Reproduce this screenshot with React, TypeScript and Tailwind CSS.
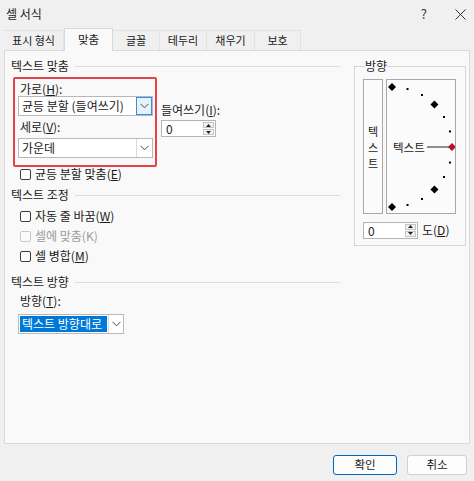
import React from "react";

const FONT = "font-['Noto_Sans_CJK_KR','Noto_Sans',sans-serif]";

function Chevron() {
  return (
    <svg width="9" height="6" viewBox="0 0 9 6" fill="none">
      <polyline points="0.5,0.8 4.5,4.8 8.5,0.8" stroke="#4a4a4a" strokeWidth="1" />
    </svg>
  );
}

function Box({ disabled }: { disabled?: boolean }) {
  return (
    <span
      className={
        disabled
          ? "inline-block w-[11px] h-[11px] rounded-[2px] border border-[#c8c8c8] bg-[#fbfbfb]"
          : "inline-block w-[11px] h-[11px] rounded-[2px] border border-[#3c3c3c] bg-white"
      }
    />
  );
}

function Check({ label, mn, disabled }: { label: string; mn: string; disabled?: boolean }) {
  return (
    <div className={disabled ? "h-[20px] flex items-center gap-[4px] text-[#9c9c9c]" : "h-[20px] flex items-center gap-[4px]"}>
      <Box disabled={disabled} />
      <span>
        {label}(<span className={disabled ? "" : "underline underline-offset-1"}>{mn}</span>)
      </span>
    </div>
  );
}

function Header({ text }: { text: string }) {
  return (
    <div className="h-[16px] flex items-center gap-[6px]">
      <span>{text}</span>
      <span className="flex-1 h-px bg-[#dddddd]" />
    </div>
  );
}

function Spinner({ w }: { w: string }) {
  return (
    <div className={`${w} h-[17px] flex bg-white border border-[#b4b4b4]`}>
      <span className="flex-1 pl-[4px] leading-[15px]">0</span>
      <div className="w-[13px] flex flex-col gap-px p-px">
        <span className="flex-1 flex items-center justify-center bg-[#f2f2f2] border border-[#c4c4c4]">
          <svg width="5" height="3" viewBox="0 0 5 3"><polygon points="2.5,0 5,3 0,3" fill="#222" /></svg>
        </span>
        <span className="flex-1 flex items-center justify-center bg-[#f2f2f2] border border-[#c4c4c4]">
          <svg width="5" height="3" viewBox="0 0 5 3"><polygon points="0,0 5,0 2.5,3" fill="#222" /></svg>
        </span>
      </div>
    </div>
  );
}

function Dial() {
  const cx = 5;
  const cy = 67;
  const r = 60;
  const pts = [] as { x: number; y: number; a: number }[];
  for (let a = -90; a <= 90; a += 15) {
    const rad = (a * Math.PI) / 180;
    pts.push({ x: cx + r * Math.cos(rad), y: cy - r * Math.sin(rad), a });
  }
  return (
    <div className="relative w-[70px] h-[135px] border border-[#a8a8a8] bg-[#fbfbfb]">
      <svg className="absolute inset-0" width="68" height="133" viewBox="0 0 68 133">
        <line x1="40" y1={cy} x2={cx + r - 2} y2={cy} stroke="#222" strokeWidth="1" />
        {pts.map((p) =>
          p.a % 45 === 0 ? (
            <polygon
              key={p.a}
              points={`${p.x},${p.y - 4} ${p.x + 4},${p.y} ${p.x},${p.y + 4} ${p.x - 4},${p.y}`}
              fill={p.a === 0 ? "#b3122a" : "#000"}
            />
          ) : (
            <rect key={p.a} x={p.x - 1} y={p.y - 1} width="2" height="2" fill="#000" />
          )
        )}
      </svg>
      <span className="absolute left-[6px] top-[59px] text-[11.5px] leading-[16px]">텍스트</span>
    </div>
  );
}

const tabs = ["표시 형식", "맞춤", "글꼴", "테두리", "채우기", "보호"];
const tabW = ["w-[60px]", "w-[49px]", "w-[47px]", "w-[47px]", "w-[48px]", "w-[46px]"];

export default function App() {
  return (
    <div className={`${FONT} w-[474px] h-[481px] bg-[#f0f0f0] text-[#1a1a1a] text-[12px] flex flex-col`}>
      {/* title bar */}
      <div className="h-[28px] flex items-center justify-between pl-[6px] pr-[8px]">
        <span className="text-[12px] text-[#222]">셀 서식</span>
        <div className="flex items-center gap-[28px]">
          <span className="text-[13px] text-[#333]">?</span>
          <svg width="11" height="11" viewBox="0 0 11 11">
            <path d="M0.5 0.5 L10.5 10.5 M10.5 0.5 L0.5 10.5" stroke="#333" strokeWidth="1" />
          </svg>
        </div>
      </div>

      {/* tabs */}
      <div className="h-[22px] flex items-end pl-[4px]">
        {tabs.map((t, i) =>
          i === 1 ? (
            <div
              key={t}
              className={`${tabW[i]} h-[23px] -mb-px relative z-10 flex items-center justify-center bg-[#f9f9f9] border border-b-0 border-[#d9d9d9] text-[11.5px]`}
            >
              {t}
            </div>
          ) : (
            <div
              key={t}
              className={`${tabW[i]} h-[20px] flex items-center justify-center bg-[#f0f0f0] border-t border-r border-[#e2e2e2] text-[11px]`}
            >
              {t}
            </div>
          )
        )}
      </div>

      {/* panel */}
      <div className="flex-1 mx-[4px] bg-[#f9f9f9] border border-[#d9d9d9] flex">
        <div className="w-[335px] pl-[6px] pt-[7px] flex flex-col">
          <Header text="텍스트 맞춤" />
          <div className="flex items-start mt-[3px] ml-[2px]">
            <div className="w-[144px] h-[90px] border-2 border-[#e3434b] rounded-[2px] pl-[3px] pt-[2px]">
              <div className="h-[15px] ml-[2px] leading-[15px]">
                가로(<span className="underline underline-offset-1">H</span>):
              </div>
              <div className="w-[135px] h-[20px] flex bg-white border border-[#b8b8b8]">
                <span className="flex-1 pl-[3px] leading-[18px] whitespace-nowrap">균등 분할 (들여쓰기)</span>
                <span className="w-[16px] flex items-center justify-center bg-[#e5f1fb] border border-[#3a8fdc]">
                  <Chevron />
                </span>
              </div>
              <div className="h-[15px] ml-[2px] mt-[3px] leading-[15px]">
                세로(<span className="underline underline-offset-1">V</span>):
              </div>
              <div className="w-[135px] h-[20px] mt-[4px] flex bg-white border border-[#b8b8b8]">
                <span className="flex-1 pl-[3px] leading-[18px]">가운데</span>
                <span className="w-[16px] flex items-center justify-center border-l border-[#dadada]">
                  <Chevron />
                </span>
              </div>
            </div>
            <div className="ml-[4px] mt-[25px] flex flex-col gap-[2px]">
              <div className="h-[16px] leading-[16px] whitespace-nowrap">
                들여쓰기(<span className="underline underline-offset-1">I</span>):
              </div>
              <Spinner w="w-[55px]" />
            </div>
          </div>
          <div className="ml-[9px] -mt-[3px]">
            <Check label="균등 분할 맞춤" mn="E" />
          </div>
          <div className="mt-[3px]">
            <Header text="텍스트 조정" />
          </div>
          <div className="ml-[9px] mt-[3px] flex flex-col">
            <Check label="자동 줄 바꿈" mn="W" />
            <Check label="셀에 맞춤" mn="K" disabled />
            <Check label="셀 병합" mn="M" />
          </div>
          <div className="mt-[8px]">
            <Header text="텍스트 방향" />
          </div>
          <div className="ml-[9px] mt-[3px] h-[16px] leading-[16px]">
            방향(<span className="underline underline-offset-1">T</span>):
          </div>
          <div className="ml-[7px] mt-[5px] w-[106px] h-[20px] flex bg-white border border-[#b8b8b8]">
            <span className="flex-1 m-px bg-[#0078d7] text-white pl-[2px] leading-[16px] whitespace-nowrap">텍스트 방향대로</span>
            <span className="w-[15px] flex items-center justify-center border-l border-[#dadada]">
              <Chevron />
            </span>
          </div>
        </div>

        {/* orientation */}
        <fieldset className="ml-[14px] mt-[7px] w-[112px] h-[188px] border border-[#d6d6d6] pl-[8px] pt-[5px]">
          <legend className="ml-[2px] px-0 leading-[16px]">방향</legend>
          <div className="flex gap-[3px]">
            <div className="w-[20px] h-[135px] border border-[#a8a8a8] bg-[#fbfbfb] flex flex-col items-center justify-center text-[11px]">
              <span className="h-[16px] leading-[16px]">텍</span>
              <span className="h-[16px] leading-[16px]">스</span>
              <span className="h-[16px] leading-[16px]">트</span>
            </div>
            <Dial />
          </div>
          <div className="flex items-center gap-[4px] mt-[7px]">
            <Spinner w="w-[55px]" />
            <span>
              도(<span className="underline underline-offset-1">D</span>)
            </span>
          </div>
        </fieldset>
      </div>

      {/* buttons */}
      <div className="h-[37px] flex items-start justify-end gap-[10px] pt-[11px] pr-[7px]">
        <button className="w-[64px] h-[20px] bg-[#fdfdfd] border border-[#0067c0] rounded-[3px] text-[11.5px]">확인</button>
        <button className="w-[60px] h-[20px] bg-[#fdfdfd] border border-[#d0d0d0] rounded-[3px] text-[11.5px]">취소</button>
      </div>
    </div>
  );
}
